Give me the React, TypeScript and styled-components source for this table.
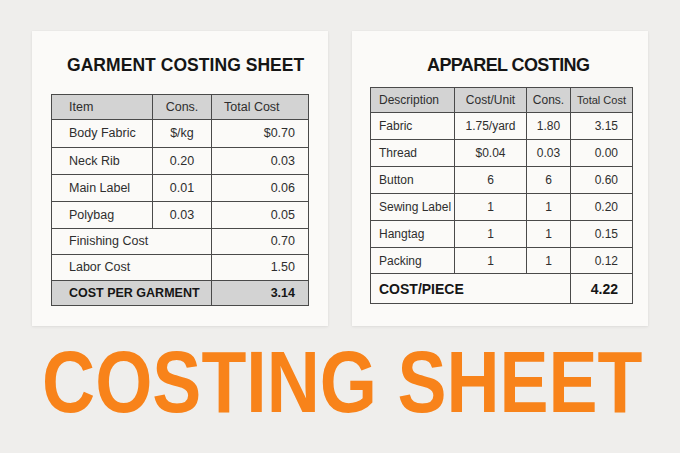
import React from "react";
import styled, { createGlobalStyle } from "styled-components";

const Global = createGlobalStyle`
  html, body { margin: 0; padding: 0; background: #efeeec; }
  body { font-family: "Liberation Sans", Arial, sans-serif; color: #2b2b2b; }
`;

const Page = styled.div`
  width: 680px;
  height: 453px;
  overflow: hidden;
  padding: 31px 32px 0;
  box-sizing: border-box;
  display: flex;
  flex-direction: column;
`;

const CardRow = styled.div`
  display: flex;
  gap: 24px;
`;

const Card = styled.div<{ $padLeft: number }>`
  width: 296px;
  height: 295px;
  box-sizing: border-box;
  background: #fbfaf8;
  box-shadow: 0 1px 3px rgba(0, 0, 0, 0.07), 0 0 1px rgba(0, 0, 0, 0.05);
  padding: 23px 0 0 ${(p) => p.$padLeft}px;
  display: flex;
  flex-direction: column;
`;

const Title = styled.h2<{ $size: number; $spacing: number; $left: number; $gap: number }>`
  margin: 0 0 ${(p) => p.$gap}px;
  padding-left: ${(p) => p.$left}px;
  font-family: "Liberation Sans", Arial, sans-serif;
  font-weight: 700;
  font-size: ${(p) => p.$size}px;
  line-height: 22px;
  letter-spacing: ${(p) => p.$spacing}px;
  color: #151515;
  white-space: nowrap;
`;

const Table = styled.table<{ $width: number }>`
  width: ${(p) => p.$width}px;
  border-collapse: collapse;
  table-layout: fixed;
  border: 1px solid #4a4a4a;
`;

const Row = styled.tr<{ $h: number }>`
  height: ${(p) => p.$h}px;
`;

type Align = "left" | "center" | "right";

const Cell = styled.td<{
  $align?: Align;
  $bg?: string;
  $size?: number;
  $bold?: boolean;
  $pl?: number;
  $pr?: number;
}>`
  border: 1px solid #4a4a4a;
  padding: 0 ${(p) => p.$pr ?? 12}px 0 ${(p) => p.$pl ?? 12}px;
  text-align: ${(p) => p.$align ?? "left"};
  background: ${(p) => p.$bg ?? "transparent"};
  font-size: ${(p) => p.$size ?? 12.5}px;
  font-weight: ${(p) => (p.$bold ? 700 : 400)};
  color: ${(p) => (p.$bold ? "#161616" : "#2e2e2e")};
  white-space: nowrap;
  line-height: 1;
  vertical-align: middle;
`;

const Banner = styled.div`
  margin-top: 12px;
  display: flex;
  justify-content: center;
  height: 100px;
`;

const BannerText = styled.span`
  display: inline-block;
  font-family: "Liberation Sans", Arial, sans-serif;
  font-weight: 700;
  font-size: 87px;
  line-height: 87px;
  color: #f8831a;
  white-space: nowrap;
  transform: scaleX(0.845);
  transform-origin: center top;
  margin-left: 4px;
`;

const GRAY = "#d3d3d3";

const leftRows: [string, string, string][] = [
  ["Body Fabric", "$/kg", "$0.70"],
  ["Neck Rib", "0.20", "0.03"],
  ["Main Label", "0.01", "0.06"],
  ["Polybag", "0.03", "0.05"],
];
const leftHeights = [28, 27, 27, 27];

const rightRows: [string, string, string, string][] = [
  ["Fabric", "1.75/yard", "1.80", "3.15"],
  ["Thread", "$0.04", "0.03", "0.00"],
  ["Button", "6", "6", "0.60"],
  ["Sewing Label", "1", "1", "0.20"],
  ["Hangtag", "1", "1", "0.15"],
  ["Packing", "1", "1", "0.12"],
];

export default function App() {
  return (
    <>
      <Global />
      <Page>
        <CardRow>
          <Card $padLeft={19}>
            <Title $size={17.5} $spacing={0.05} $left={16} $gap={18}>
              GARMENT COSTING SHEET
            </Title>
            <Table $width={257}>
              <colgroup>
                <col style={{ width: 101 }} />
                <col style={{ width: 59 }} />
                <col style={{ width: 97 }} />
              </colgroup>
              <tbody>
                <Row $h={25}>
                  <Cell $bg={GRAY} $pl={17}>Item</Cell>
                  <Cell $bg={GRAY} $align="center" $pl={0} $pr={0}>Cons.</Cell>
                  <Cell $bg={GRAY}>Total Cost</Cell>
                </Row>
                {leftRows.map((r, i) => (
                  <Row $h={leftHeights[i]} key={r[0]}>
                    <Cell $pl={17}>{r[0]}</Cell>
                    <Cell $align="center" $pl={0} $pr={0}>{r[1]}</Cell>
                    <Cell $align="right" $pr={13}>{r[2]}</Cell>
                  </Row>
                ))}
                <Row $h={26}>
                  <Cell colSpan={2} $pl={17}>Finishing Cost</Cell>
                  <Cell $align="right" $pr={13}>0.70</Cell>
                </Row>
                <Row $h={26}>
                  <Cell colSpan={2} $pl={17}>Labor Cost</Cell>
                  <Cell $align="right" $pr={13}>1.50</Cell>
                </Row>
                <Row $h={25}>
                  <Cell colSpan={2} $bg={GRAY} $pl={17} $size={12.5} $bold>
                    COST PER GARMENT
                  </Cell>
                  <Cell $bg={GRAY} $align="right" $pr={13} $bold>3.14</Cell>
                </Row>
              </tbody>
            </Table>
          </Card>
          <Card $padLeft={18}>
            <Title $size={18} $spacing={-0.6} $left={57} $gap={11}>
              APPAREL COSTING
            </Title>
            <Table $width={262}>
              <colgroup>
                <col style={{ width: 84 }} />
                <col style={{ width: 72 }} />
                <col style={{ width: 44 }} />
                <col style={{ width: 62 }} />
              </colgroup>
              <tbody>
                <Row $h={25}>
                  <Cell $bg={GRAY} $size={12} $pl={8} $pr={0}>Description</Cell>
                  <Cell $bg={GRAY} $size={12} $align="center" $pl={0} $pr={0}>Cost/Unit</Cell>
                  <Cell $bg={GRAY} $size={12} $align="center" $pl={0} $pr={0}>Cons.</Cell>
                  <Cell $bg={GRAY} $size={11} $align="center" $pl={0} $pr={0}>Total Cost</Cell>
                </Row>
                {rightRows.map((r, i) => (
                  <Row $h={i === 5 ? 26 : 27} key={r[0]}>
                    <Cell $size={12} $pl={8} $pr={0}>{r[0]}</Cell>
                    <Cell $size={12} $align="center" $pl={0} $pr={0}>{r[1]}</Cell>
                    <Cell $size={12} $align="center" $pl={0} $pr={0}>{r[2]}</Cell>
                    <Cell $size={12} $align="right" $pr={14}>{r[3]}</Cell>
                  </Row>
                ))}
                <Row $h={30}>
                  <Cell colSpan={3} $size={14} $pl={8} $bold>COST/PIECE</Cell>
                  <Cell $size={14} $align="right" $pr={14} $bold>4.22</Cell>
                </Row>
              </tbody>
            </Table>
          </Card>
        </CardRow>
        <Banner>
          <BannerText>COSTING SHEET</BannerText>
        </Banner>
      </Page>
    </>
  );
}
